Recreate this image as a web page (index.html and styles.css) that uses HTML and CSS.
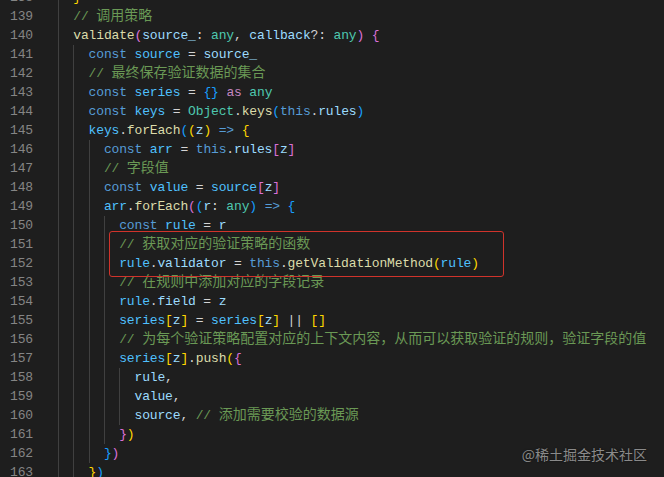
FILE: index.html
```html
<!DOCTYPE html>
<html lang="zh-CN">
<head>
<meta charset="utf-8">
<title>validate</title>
<link rel="stylesheet" href="styles.css">
</head>
<body>
<div class="screen">
  <div class="editor">
    <div class="line"><span class="ln">138</span><span class="code"><span class="ind"></span><span class="b1">}</span></span></div>
    <div class="line"><span class="ln">139</span><span class="code"><span class="ind"></span><span class="cm">// <span class="cj">调用策略</span></span></span></div>
    <div class="line"><span class="ln">140</span><span class="code"><span class="ind"></span><span class="f">validate</span><span class="b2">(</span><span class="v">source_</span>: <span class="t">any</span>, <span class="v">callback</span>?: <span class="t">any</span><span class="b2">)</span> <span class="b2">{</span></span></div>
    <div class="line"><span class="ln">141</span><span class="code"><span class="ind"></span><span class="ind"></span><span class="k">const</span> <span class="c">source</span> = <span class="v">source_</span></span></div>
    <div class="line"><span class="ln">142</span><span class="code"><span class="ind"></span><span class="ind"></span><span class="cm">// <span class="cj">最终保存验证数据的集合</span></span></span></div>
    <div class="line"><span class="ln">143</span><span class="code"><span class="ind"></span><span class="ind"></span><span class="k">const</span> <span class="c">series</span> = <span class="b3">{}</span> <span class="ctl">as</span> <span class="t">any</span></span></div>
    <div class="line"><span class="ln">144</span><span class="code"><span class="ind"></span><span class="ind"></span><span class="k">const</span> <span class="c">keys</span> = <span class="t">Object</span>.<span class="f">keys</span><span class="b3">(</span><span class="k">this</span>.<span class="v">rules</span><span class="b3">)</span></span></div>
    <div class="line"><span class="ln">145</span><span class="code"><span class="ind"></span><span class="ind"></span><span class="c">keys</span>.<span class="f">forEach</span><span class="b3">(</span><span class="b1">(</span><span class="v">z</span><span class="b1">)</span> <span class="k">=&gt;</span> <span class="b1">{</span></span></div>
    <div class="line"><span class="ln">146</span><span class="code"><span class="ind"></span><span class="ind"></span><span class="ind"></span><span class="k">const</span> <span class="c">arr</span> = <span class="k">this</span>.<span class="v">rules</span><span class="b2">[</span><span class="v">z</span><span class="b2">]</span></span></div>
    <div class="line"><span class="ln">147</span><span class="code"><span class="ind"></span><span class="ind"></span><span class="ind"></span><span class="cm">// <span class="cj">字段值</span></span></span></div>
    <div class="line"><span class="ln">148</span><span class="code"><span class="ind"></span><span class="ind"></span><span class="ind"></span><span class="k">const</span> <span class="c">value</span> = <span class="c">source</span><span class="b2">[</span><span class="v">z</span><span class="b2">]</span></span></div>
    <div class="line"><span class="ln">149</span><span class="code"><span class="ind"></span><span class="ind"></span><span class="ind"></span><span class="c">arr</span>.<span class="f">forEach</span><span class="b2">(</span><span class="b3">(</span><span class="v">r</span>: <span class="t">any</span><span class="b3">)</span> <span class="k">=&gt;</span> <span class="b3">{</span></span></div>
    <div class="line"><span class="ln">150</span><span class="code"><span class="ind"></span><span class="ind"></span><span class="ind"></span><span class="ind"></span><span class="k">const</span> <span class="c">rule</span> = <span class="v">r</span></span></div>
    <div class="line"><span class="ln">151</span><span class="code"><span class="ind"></span><span class="ind"></span><span class="ind"></span><span class="ind"></span><span class="cm">// <span class="cj">获取对应的验证策略的函数</span></span></span></div>
    <div class="line"><span class="ln">152</span><span class="code"><span class="ind"></span><span class="ind"></span><span class="ind"></span><span class="ind"></span><span class="c">rule</span>.<span class="v">validator</span> = <span class="k">this</span>.<span class="f">getValidationMethod</span><span class="b1">(</span><span class="c">rule</span><span class="b1">)</span></span></div>
    <div class="line"><span class="ln">153</span><span class="code"><span class="ind"></span><span class="ind"></span><span class="ind"></span><span class="ind"></span><span class="cm">// <span class="cj">在规则中添加对应的字段记录</span></span></span></div>
    <div class="line"><span class="ln">154</span><span class="code"><span class="ind"></span><span class="ind"></span><span class="ind"></span><span class="ind"></span><span class="c">rule</span>.<span class="v">field</span> = <span class="v">z</span></span></div>
    <div class="line"><span class="ln">155</span><span class="code"><span class="ind"></span><span class="ind"></span><span class="ind"></span><span class="ind"></span><span class="c">series</span><span class="b1">[</span><span class="v">z</span><span class="b1">]</span> = <span class="c">series</span><span class="b1">[</span><span class="v">z</span><span class="b1">]</span> || <span class="b1">[]</span></span></div>
    <div class="line"><span class="ln">156</span><span class="code"><span class="ind"></span><span class="ind"></span><span class="ind"></span><span class="ind"></span><span class="cm">// <span class="cj">为每个验证策略配置对应的上下文内容，从而可以获取验证的规则，验证字段的值</span></span></span></div>
    <div class="line"><span class="ln">157</span><span class="code"><span class="ind"></span><span class="ind"></span><span class="ind"></span><span class="ind"></span><span class="c">series</span><span class="b1">[</span><span class="v">z</span><span class="b1">]</span>.<span class="f">push</span><span class="b1">(</span><span class="b2">{</span></span></div>
    <div class="line"><span class="ln">158</span><span class="code"><span class="ind"></span><span class="ind"></span><span class="ind"></span><span class="ind"></span><span class="ind"></span><span class="v">rule</span>,</span></div>
    <div class="line"><span class="ln">159</span><span class="code"><span class="ind"></span><span class="ind"></span><span class="ind"></span><span class="ind"></span><span class="ind"></span><span class="v">value</span>,</span></div>
    <div class="line"><span class="ln">160</span><span class="code"><span class="ind"></span><span class="ind"></span><span class="ind"></span><span class="ind"></span><span class="ind"></span><span class="v">source</span>, <span class="cm">// <span class="cj">添加需要校验的数据源</span></span></span></div>
    <div class="line"><span class="ln">161</span><span class="code"><span class="ind"></span><span class="ind"></span><span class="ind"></span><span class="ind"></span><span class="b2">}</span><span class="b1">)</span></span></div>
    <div class="line"><span class="ln">162</span><span class="code"><span class="ind"></span><span class="ind"></span><span class="ind"></span><span class="b3">}</span><span class="b2">)</span></span></div>
    <div class="line"><span class="ln">163</span><span class="code"><span class="ind"></span><span class="ind"></span><span class="b1">}</span><span class="b3">)</span></span></div>
  </div>
  <div class="highlight-box"></div>
  <div class="watermark">@稀土掘金技术社区</div>
</div>
</body>
</html>
```

FILE: styles.css
```css
html, body {
  margin: 0;
  padding: 0;
  background: #1e1e1e;
}

.screen {
  position: relative;
  width: 664px;
  height: 477px;
  overflow: hidden;
  background: #1e1e1e;
}

.editor {
  margin-top: -12px;
  font-family: "Liberation Mono", "DejaVu Sans Mono", monospace;
  font-size: 13px;
  letter-spacing: -0.15px;
  color: #d4d4d4;
}

.line {
  display: flex;
  height: 19px;
  line-height: 19px;
  white-space: pre;
}

.ln {
  flex: none;
  width: 33px;
  text-align: right;
  color: #858585;
}

.code {
  margin-left: 25px;
  white-space: pre;
}

.ind {
  display: inline-block;
  width: 15.3px;
  height: 19px;
  vertical-align: top;
  background: linear-gradient(#404040, #404040) no-repeat left top / 1px 100%;
}

.cj {
  font-family: "Noto Sans CJK SC", "Noto Sans", sans-serif;
  font-size: 14px;
  letter-spacing: 0;
  line-height: 1;
}

.k { color: #569cd6; }
.c { color: #4fc1ff; }
.v { color: #9cdcfe; }
.f { color: #dcdcaa; }
.t { color: #4ec9b0; }
.ctl { color: #c586c0; }
.cm { color: #6a9955; }
.b1 { color: #ffd700; }
.b2 { color: #da70d6; }
.b3 { color: #179fff; }

.highlight-box {
  position: absolute;
  left: 109px;
  top: 231px;
  width: 393px;
  height: 44px;
  border: 1px solid #d0332b;
  border-radius: 3px;
}

.watermark {
  position: absolute;
  right: 17px;
  bottom: 14px;
  font-family: "Noto Sans CJK SC", "Noto Sans", sans-serif;
  font-size: 14px;
  line-height: 18px;
  color: #8a8a8a;
  text-shadow: 0 0 2px rgba(0, 0, 0, 0.6);
}
```
